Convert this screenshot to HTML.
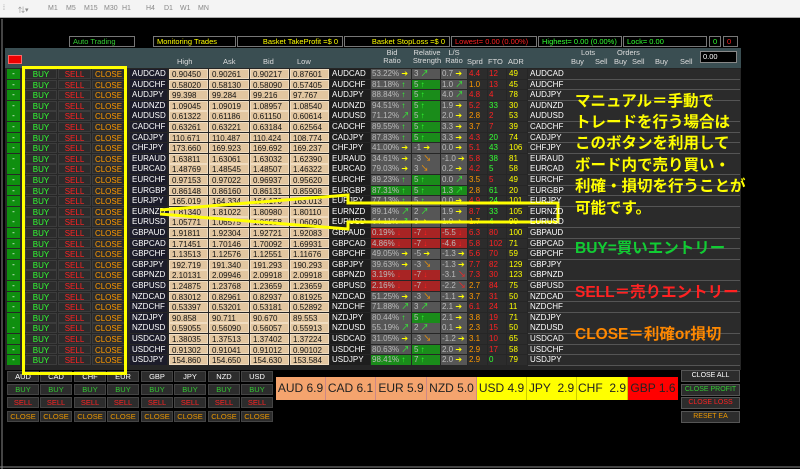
<!DOCTYPE html>
<html><head><meta charset="utf-8"><style>
*{margin:0;padding:0;box-sizing:border-box}
body{width:800px;height:469px;background:#000;position:relative;overflow:hidden;font-family:"Liberation Sans","Noto Sans CJK JP",sans-serif;font-size:8px}
.tb{position:absolute;left:0;top:0;width:800px;height:18px;background:#f4f4f4;border-bottom:1px solid #aaa;color:#888;font-size:7px}
.tb span{position:absolute;top:5px}
.st{position:absolute;top:36px;height:11px;background:#000;border:1px solid #777;font-size:7.5px;line-height:9px;padding-left:3px;white-space:nowrap;overflow:hidden}
.pan{position:absolute;left:5px;top:48px;width:736px;height:322px;background:#262626}
.hd{position:absolute;left:5px;top:48px;width:736px;height:20px;background:#3a4e52;color:#ddd;font-size:7.5px}
.hd span{position:absolute;line-height:8px;text-align:center}
.r{position:absolute;left:0;width:741px;height:10.6px}
.r>*{position:absolute;top:0;height:9.8px;line-height:9.8px;font-style:normal;text-decoration:none;font-weight:normal;white-space:nowrap;overflow:hidden}
.r::after{content:"";position:absolute;left:528px;width:212px;top:0;height:9.8px;background:#2b2b2b;border-bottom:1px solid #555}
.g{left:7px;width:13px;background:#0f8f0f;color:#fff;text-align:center}
.bu,.se,.cl{background:#2c2c2c;text-align:center;border:1px solid #3c3c3c}
.bu{left:25px;width:32px;color:#3f3}
.se{left:58px;width:33px;color:#f22}
.cl{left:92px;width:33px;color:#f90}
.p1{left:130px;width:37px;background:#1c1c2a;color:#fff;padding-left:2px}
.n{background:#e2c6a0;color:#111;padding-left:2px;border:1px solid #f0dcc0}
.h{left:169px;width:39px}.a{left:209px;width:40px}.b{left:250px;width:39px}.l{left:290px;width:39px}
.p2{left:330px;width:40px;background:#1e1e1e;color:#fff;padding-left:2px}
.br{left:371px;width:40px;background:#565656;color:#bbb;padding-left:1px}
.rs{left:412px;width:28px;background:#565656;color:#bbb;padding-left:2px}
.ls{left:441px;width:26px;background:#565656;color:#bbb;padding-left:1px}
.G{background:#1a8c1a!important}.R{background:#a82424!important}
.sp{left:468px;width:19px;background:#2c2c2c;padding-left:1px}
.ft{left:488px;width:18px;background:#2c2c2c;padding-left:1px}
.ad{left:507px;width:20px;background:#2c2c2c;color:#ff0;padding-left:2px}
.p3{left:530px;width:40px;color:#fff;z-index:2}
.y{color:#ff0}.gr{color:#3f3}.or{color:#f90}.rd{color:#f22}
.cb{position:absolute;width:32px;height:11px;background:#2c2c2c;border:1px solid #444;text-align:center;line-height:9px;font-size:7.5px}
.sb{position:absolute;top:377px;height:23px;line-height:23px;font-size:12px;color:#222;text-align:center;border-right:1px solid #c88}
.rb{position:absolute;left:681px;width:59px;height:12px;background:#2c2c2c;border:1px solid #555;text-align:center;font-size:7px;line-height:10px}
.jp{position:absolute;left:575px;font-size:15.5px;font-weight:bold;color:#ff0;white-space:nowrap;letter-spacing:0}
</style></head><body>
<div class="tb"><span style="left:3px">⁞</span><span style="left:18px">⇅▾</span><span style="left:48px">M1</span><span style="left:66px">M5</span><span style="left:84px">M15</span><span style="left:104px">M30</span><span style="left:122px">H1</span><span style="left:146px">H4</span><span style="left:164px">D1</span><span style="left:180px">W1</span><span style="left:198px">MN</span></div>

<div class="st" style="left:69px;width:66px;color:#3c3">Auto Trading</div>
<div class="st" style="left:153px;width:83px;color:#ff0">Monitoring Trades</div>
<div class="st" style="left:237px;width:106px;color:#ff0;text-align:right;padding-right:4px">Basket TakeProfit =$ 0</div>
<div class="st" style="left:344px;width:106px;color:#ff0;text-align:right;padding-right:4px">Basket StopLoss =$ 0</div>
<div class="st" style="left:451px;width:86px;color:#f22">Lowest= 0.00 (0.00%)</div>
<div class="st" style="left:538px;width:84px;color:#3f3">Highest= 0.00 (0.00%)</div>
<div class="st" style="left:623px;width:84px;color:#3f3">Lock= 0.00</div>
<div class="st" style="left:709px;width:12px;color:#3f3">0</div>
<div class="st" style="left:723px;width:15px;color:#f22">0</div>

<div class="pan"></div>
<div class="hd">
<div style="position:absolute;left:3px;top:7px;width:14px;height:9px;background:#e00;border:1px solid #f66"></div>
<span style="left:172px;top:10px">High</span><span style="left:218px;top:10px">Ask</span><span style="left:258px;top:10px">Bid</span><span style="left:292px;top:10px">Low</span>
<span style="left:372px;top:1px;width:30px">Bid<br>Ratio</span><span style="left:407px;top:1px;width:30px">Relative<br>Strength</span><span style="left:437px;top:1px;width:24px">L/S<br>Ratio</span>
<span style="left:462px;top:10px">Sprd</span><span style="left:483px;top:10px">FTO</span><span style="left:503px;top:10px">ADR</span>
<span style="left:576px;top:1px">Lots</span><span style="left:612px;top:1px">Orders</span>
<span style="left:566px;top:10px">Buy</span><span style="left:590px;top:10px">Sell</span><span style="left:609px;top:10px">Buy</span><span style="left:627px;top:10px">Sell</span><span style="left:650px;top:10px">Buy</span><span style="left:675px;top:10px">Sell</span>
<div style="position:absolute;left:695px;top:3px;width:37px;height:12px;background:#000;border:1px solid #888;color:#fff;font-size:7.5px;line-height:10px;padding-left:2px">0.00</div>
</div>

<div style="position:absolute;left:0;top:69px">
<div class="r" style="top:0"><i class="g">-</i><b class="bu">BUY</b><b class="se">SELL</b><b class="cl">CLOSE</b><s class="p1">AUDCAD</s><u class="n h">0.90450</u><u class="n a">0.90261</u><u class="n b">0.90217</u><u class="n l">0.87601</u><s class="p2">AUDCAD</s><em class="br">53.22% <span class="y">➔</span></em><em class="rs">3 <span class="gr">↗</span></em><em class="ls">0.7 <span class="y">➔</span></em><span class="sp rd">4.4</span><span class="ft rd">12</span><span class="ad">49</span><s class="p3">AUDCAD</s></div>
<div class="r" style="top:10.6px"><i class="g">-</i><b class="bu">BUY</b><b class="se">SELL</b><b class="cl">CLOSE</b><s class="p1">AUDCHF</s><u class="n h">0.58020</u><u class="n a">0.58130</u><u class="n b">0.58090</u><u class="n l">0.57405</u><s class="p2">AUDCHF</s><em class="br">81.18% <span class="gr">↑</span></em><em class="rs G">5 <span class="gr">↑</span></em><em class="ls">1.0 <span class="gr">↗</span></em><span class="sp or">1.0</span><span class="ft rd">13</span><span class="ad">45</span><s class="p3">AUDCHF</s></div>
<div class="r" style="top:21.2px"><i class="g">-</i><b class="bu">BUY</b><b class="se">SELL</b><b class="cl">CLOSE</b><s class="p1">AUDJPY</s><u class="n h">99.398</u><u class="n a">99.284</u><u class="n b">99.216</u><u class="n l">97.767</u><s class="p2">AUDJPY</s><em class="br">88.84% <span class="gr">↑</span></em><em class="rs G">5 <span class="gr">↑</span></em><em class="ls">4.0 <span class="gr">↗</span></em><span class="sp rd">4.8</span><span class="ft rd">4</span><span class="ad">78</span><s class="p3">AUDJPY</s></div>
<div class="r" style="top:31.8px"><i class="g">-</i><b class="bu">BUY</b><b class="se">SELL</b><b class="cl">CLOSE</b><s class="p1">AUDNZD</s><u class="n h">1.09045</u><u class="n a">1.09019</u><u class="n b">1.08957</u><u class="n l">1.08540</u><s class="p2">AUDNZD</s><em class="br">94.51% <span class="gr">↑</span></em><em class="rs G">5 <span class="gr">↑</span></em><em class="ls">1.9 <span class="y">➔</span></em><span class="sp rd">5.2</span><span class="ft gr">33</span><span class="ad">30</span><s class="p3">AUDNZD</s></div>
<div class="r" style="top:42.4px"><i class="g">-</i><b class="bu">BUY</b><b class="se">SELL</b><b class="cl">CLOSE</b><s class="p1">AUDUSD</s><u class="n h">0.61322</u><u class="n a">0.61186</u><u class="n b">0.61150</u><u class="n l">0.60614</u><s class="p2">AUDUSD</s><em class="br">71.12% <span class="gr">↗</span></em><em class="rs G">5 <span class="gr">↑</span></em><em class="ls">2.0 <span class="y">➔</span></em><span class="sp or">2.8</span><span class="ft rd">2</span><span class="ad">53</span><s class="p3">AUDUSD</s></div>
<div class="r" style="top:53px"><i class="g">-</i><b class="bu">BUY</b><b class="se">SELL</b><b class="cl">CLOSE</b><s class="p1">CADCHF</s><u class="n h">0.63261</u><u class="n a">0.63221</u><u class="n b">0.63184</u><u class="n l">0.62564</u><s class="p2">CADCHF</s><em class="br">89.55% <span class="gr">↑</span></em><em class="rs G">5 <span class="gr">↑</span></em><em class="ls">3.3 <span class="y">➔</span></em><span class="sp or">3.7</span><span class="ft rd">7</span><span class="ad">39</span><s class="p3">CADCHF</s></div>
<div class="r" style="top:63.6px"><i class="g">-</i><b class="bu">BUY</b><b class="se">SELL</b><b class="cl">CLOSE</b><s class="p1">CADJPY</s><u class="n h">110.671</u><u class="n a">110.487</u><u class="n b">110.424</u><u class="n l">108.774</u><s class="p2">CADJPY</s><em class="br">87.83% <span class="gr">↑</span></em><em class="rs G">5 <span class="gr">↑</span></em><em class="ls">3.3 <span class="y">➔</span></em><span class="sp rd">4.3</span><span class="ft gr">20</span><span class="ad">74</span><s class="p3">CADJPY</s></div>
<div class="r" style="top:74.2px"><i class="g">-</i><b class="bu">BUY</b><b class="se">SELL</b><b class="cl">CLOSE</b><s class="p1">CHFJPY</s><u class="n h">173.660</u><u class="n a">169.923</u><u class="n b">169.692</u><u class="n l">169.237</u><s class="p2">CHFJPY</s><em class="br">41.00% <span class="y">➔</span></em><em class="rs">-1 <span class="y">➔</span></em><em class="ls">0.0 <span class="y">➔</span></em><span class="sp rd">5.1</span><span class="ft gr">43</span><span class="ad">106</span><s class="p3">CHFJPY</s></div>
<div class="r" style="top:84.8px"><i class="g">-</i><b class="bu">BUY</b><b class="se">SELL</b><b class="cl">CLOSE</b><s class="p1">EURAUD</s><u class="n h">1.63811</u><u class="n a">1.63061</u><u class="n b">1.63032</u><u class="n l">1.62390</u><s class="p2">EURAUD</s><em class="br">34.61% <span class="y">➔</span></em><em class="rs">-3 <span class="or">↘</span></em><em class="ls">-1.0 <span class="y">➔</span></em><span class="sp rd">5.8</span><span class="ft gr">38</span><span class="ad">81</span><s class="p3">EURAUD</s></div>
<div class="r" style="top:95.4px"><i class="g">-</i><b class="bu">BUY</b><b class="se">SELL</b><b class="cl">CLOSE</b><s class="p1">EURCAD</s><u class="n h">1.48769</u><u class="n a">1.48545</u><u class="n b">1.48507</u><u class="n l">1.46322</u><s class="p2">EURCAD</s><em class="br">79.03% <span class="y">➔</span></em><em class="rs">3 <span class="or">↘</span></em><em class="ls">0.2 <span class="y">➔</span></em><span class="sp rd">4.2</span><span class="ft gr">5</span><span class="ad">58</span><s class="p3">EURCAD</s></div>
<div class="r" style="top:106px"><i class="g">-</i><b class="bu">BUY</b><b class="se">SELL</b><b class="cl">CLOSE</b><s class="p1">EURCHF</s><u class="n h">0.97153</u><u class="n a">0.97022</u><u class="n b">0.96937</u><u class="n l">0.95620</u><s class="p2">EURCHF</s><em class="br">89.23% <span class="gr">↑</span></em><em class="rs G">5 <span class="gr">↑</span></em><em class="ls">0.0 <span class="gr">↗</span></em><span class="sp or">3.5</span><span class="ft rd">5</span><span class="ad">49</span><s class="p3">EURCHF</s></div>
<div class="r" style="top:116.6px"><i class="g">-</i><b class="bu">BUY</b><b class="se">SELL</b><b class="cl">CLOSE</b><s class="p1">EURGBP</s><u class="n h">0.86148</u><u class="n a">0.86160</u><u class="n b">0.86131</u><u class="n l">0.85908</u><s class="p2">EURGBP</s><em class="br G">87.31% <span class="gr">↑</span></em><em class="rs G">5 <span class="gr">↑</span></em><em class="ls G">1.3 <span class="gr">↗</span></em><span class="sp or">2.8</span><span class="ft gr">61</span><span class="ad">20</span><s class="p3">EURGBP</s></div>
<div class="r" style="top:127.2px"><i class="g">-</i><b class="bu">BUY</b><b class="se">SELL</b><b class="cl">CLOSE</b><s class="p1">EURJPY</s><u class="n h">165.019</u><u class="n a">164.334</u><u class="n b">164.170</u><u class="n l">163.013</u><s class="p2">EURJPY</s><em class="br">77.13% <span class="gr">↑</span></em><em class="rs">5 <span class="gr">↑</span></em><em class="ls">0.0 <span class="y">➔</span></em><span class="sp rd">4.9</span><span class="ft gr">24</span><span class="ad">101</span><s class="p3">EURJPY</s></div>
<div class="r" style="top:137.8px"><i class="g">-</i><b class="bu">BUY</b><b class="se">SELL</b><b class="cl">CLOSE</b><s class="p1">EURNZD</s><u class="n h">1.81340</u><u class="n a">1.81022</u><u class="n b">1.80980</u><u class="n l">1.80110</u><s class="p2">EURNZD</s><em class="br">89.14% <span class="gr">↗</span></em><em class="rs">2 <span class="gr">↗</span></em><em class="ls">1.9 <span class="y">➔</span></em><span class="sp rd">8.7</span><span class="ft gr">33</span><span class="ad">105</span><s class="p3">EURNZD</s></div>
<div class="r" style="top:148.4px"><i class="g">-</i><b class="bu">BUY</b><b class="se">SELL</b><b class="cl">CLOSE</b><s class="p1">EURUSD</s><u class="n h">1.05771</u><u class="n a">1.06575</u><u class="n b">1.06558</u><u class="n l">1.06090</u><s class="p2">EURUSD</s><em class="br">64.11% <span class="gr">↗</span></em><em class="rs">3 <span class="y">➔</span></em><em class="ls">1.0 <span class="y">➔</span></em><span class="sp or">1.7</span><span class="ft gr">4</span><span class="ad">90</span><s class="p3">EURUSD</s></div>
<div class="r" style="top:159px"><i class="g">-</i><b class="bu">BUY</b><b class="se">SELL</b><b class="cl">CLOSE</b><s class="p1">GBPAUD</s><u class="n h">1.91811</u><u class="n a">1.92304</u><u class="n b">1.92721</u><u class="n l">1.92083</u><s class="p2">GBPAUD</s><em class="br R">0.19% <span class="rd">↓</span></em><em class="rs R">-7 <span class="rd">↓</span></em><em class="ls R">-5.5 <span class="rd">↓</span></em><span class="sp rd">6.3</span><span class="ft rd">80</span><span class="ad">100</span><s class="p3">GBPAUD</s></div>
<div class="r" style="top:169.6px"><i class="g">-</i><b class="bu">BUY</b><b class="se">SELL</b><b class="cl">CLOSE</b><s class="p1">GBPCAD</s><u class="n h">1.71451</u><u class="n a">1.70146</u><u class="n b">1.70092</u><u class="n l">1.69931</u><s class="p2">GBPCAD</s><em class="br R">4.86% <span class="rd">↓</span></em><em class="rs R">-7 <span class="rd">↓</span></em><em class="ls R">-4.6 <span class="rd">↓</span></em><span class="sp rd">5.8</span><span class="ft rd">102</span><span class="ad">71</span><s class="p3">GBPCAD</s></div>
<div class="r" style="top:180.2px"><i class="g">-</i><b class="bu">BUY</b><b class="se">SELL</b><b class="cl">CLOSE</b><s class="p1">GBPCHF</s><u class="n h">1.13513</u><u class="n a">1.12576</u><u class="n b">1.12551</u><u class="n l">1.11676</u><s class="p2">GBPCHF</s><em class="br">49.05% <span class="y">➔</span></em><em class="rs">-5 <span class="y">➔</span></em><em class="ls">-1.3 <span class="y">➔</span></em><span class="sp rd">5.6</span><span class="ft rd">70</span><span class="ad">59</span><s class="p3">GBPCHF</s></div>
<div class="r" style="top:190.8px"><i class="g">-</i><b class="bu">BUY</b><b class="se">SELL</b><b class="cl">CLOSE</b><s class="p1">GBPJPY</s><u class="n h">192.719</u><u class="n a">191.340</u><u class="n b">191.293</u><u class="n l">190.293</u><s class="p2">GBPJPY</s><em class="br">39.63% <span class="y">➔</span></em><em class="rs">-3 <span class="or">↘</span></em><em class="ls">-1.3 <span class="y">➔</span></em><span class="sp rd">7.7</span><span class="ft rd">82</span><span class="ad">129</span><s class="p3">GBPJPY</s></div>
<div class="r" style="top:201.4px"><i class="g">-</i><b class="bu">BUY</b><b class="se">SELL</b><b class="cl">CLOSE</b><s class="p1">GBPNZD</s><u class="n h">2.10131</u><u class="n a">2.09946</u><u class="n b">2.09918</u><u class="n l">2.09918</u><s class="p2">GBPNZD</s><em class="br R">3.19% <span class="rd">↓</span></em><em class="rs R">-7 <span class="rd">↓</span></em><em class="ls">-3.1 <span class="rd">↘</span></em><span class="sp rd">7.3</span><span class="ft rd">30</span><span class="ad">123</span><s class="p3">GBPNZD</s></div>
<div class="r" style="top:212px"><i class="g">-</i><b class="bu">BUY</b><b class="se">SELL</b><b class="cl">CLOSE</b><s class="p1">GBPUSD</s><u class="n h">1.24875</u><u class="n a">1.23768</u><u class="n b">1.23659</u><u class="n l">1.23659</u><s class="p2">GBPUSD</s><em class="br R">2.16% <span class="rd">↓</span></em><em class="rs R">-7 <span class="rd">↓</span></em><em class="ls">-2.2 <span class="rd">↘</span></em><span class="sp or">2.7</span><span class="ft rd">84</span><span class="ad">75</span><s class="p3">GBPUSD</s></div>
<div class="r" style="top:222.6px"><i class="g">-</i><b class="bu">BUY</b><b class="se">SELL</b><b class="cl">CLOSE</b><s class="p1">NZDCAD</s><u class="n h">0.83012</u><u class="n a">0.82961</u><u class="n b">0.82937</u><u class="n l">0.81925</u><s class="p2">NZDCAD</s><em class="br">51.25% <span class="y">➔</span></em><em class="rs">-3 <span class="or">↘</span></em><em class="ls">-1.1 <span class="y">➔</span></em><span class="sp or">3.7</span><span class="ft rd">31</span><span class="ad">50</span><s class="p3">NZDCAD</s></div>
<div class="r" style="top:233.2px"><i class="g">-</i><b class="bu">BUY</b><b class="se">SELL</b><b class="cl">CLOSE</b><s class="p1">NZDCHF</s><u class="n h">0.53397</u><u class="n a">0.53201</u><u class="n b">0.53181</u><u class="n l">0.52892</u><s class="p2">NZDCHF</s><em class="br">71.88% <span class="gr">↗</span></em><em class="rs">3 <span class="gr">↗</span></em><em class="ls">2.1 <span class="y">➔</span></em><span class="sp rd">6.1</span><span class="ft rd">24</span><span class="ad">11</span><s class="p3">NZDCHF</s></div>
<div class="r" style="top:243.8px"><i class="g">-</i><b class="bu">BUY</b><b class="se">SELL</b><b class="cl">CLOSE</b><s class="p1">NZDJPY</s><u class="n h">90.858</u><u class="n a">90.711</u><u class="n b">90.670</u><u class="n l">89.553</u><s class="p2">NZDJPY</s><em class="br">80.44% <span class="gr">↑</span></em><em class="rs G">5 <span class="gr">↑</span></em><em class="ls">2.1 <span class="y">➔</span></em><span class="sp or">3.8</span><span class="ft rd">19</span><span class="ad">71</span><s class="p3">NZDJPY</s></div>
<div class="r" style="top:254.4px"><i class="g">-</i><b class="bu">BUY</b><b class="se">SELL</b><b class="cl">CLOSE</b><s class="p1">NZDUSD</s><u class="n h">0.59055</u><u class="n a">0.56090</u><u class="n b">0.56057</u><u class="n l">0.55913</u><s class="p2">NZDUSD</s><em class="br">55.19% <span class="gr">↗</span></em><em class="rs">2 <span class="gr">↗</span></em><em class="ls">0.1 <span class="y">➔</span></em><span class="sp or">2.3</span><span class="ft rd">15</span><span class="ad">50</span><s class="p3">NZDUSD</s></div>
<div class="r" style="top:265px"><i class="g">-</i><b class="bu">BUY</b><b class="se">SELL</b><b class="cl">CLOSE</b><s class="p1">USDCAD</s><u class="n h">1.38035</u><u class="n a">1.37513</u><u class="n b">1.37402</u><u class="n l">1.37224</u><s class="p2">USDCAD</s><em class="br">31.05% <span class="y">➔</span></em><em class="rs">-3 <span class="or">↘</span></em><em class="ls">-1.2 <span class="y">➔</span></em><span class="sp or">3.1</span><span class="ft rd">10</span><span class="ad">65</span><s class="p3">USDCAD</s></div>
<div class="r" style="top:275.6px"><i class="g">-</i><b class="bu">BUY</b><b class="se">SELL</b><b class="cl">CLOSE</b><s class="p1">USDCHF</s><u class="n h">0.91302</u><u class="n a">0.91041</u><u class="n b">0.91012</u><u class="n l">0.90102</u><s class="p2">USDCHF</s><em class="br">80.63% <span class="gr">↗</span></em><em class="rs G">5 <span class="gr">↑</span></em><em class="ls">2.0 <span class="y">➔</span></em><span class="sp or">2.9</span><span class="ft rd">17</span><span class="ad">58</span><s class="p3">USDCHF</s></div>
<div class="r" style="top:286.2px"><i class="g">-</i><b class="bu">BUY</b><b class="se">SELL</b><b class="cl">CLOSE</b><s class="p1">USDJPY</s><u class="n h">154.860</u><u class="n a">154.650</u><u class="n b">154.630</u><u class="n l">153.584</u><s class="p2">USDJPY</s><em class="br G">98.41% <span class="gr">↑</span></em><em class="rs G">7 <span class="gr">↑</span></em><em class="ls">2.0 <span class="y">➔</span></em><span class="sp or">2.9</span><span class="ft gr">0</span><span class="ad">79</span><s class="p3">USDJPY</s></div>
</div>

<div class="cb" style="left:7px;top:371px;color:#fff">AUD</div><div class="cb" style="left:40px;top:371px;color:#fff">CAD</div><div class="cb" style="left:74px;top:371px;color:#fff">CHF</div><div class="cb" style="left:107px;top:371px;color:#fff">EUR</div><div class="cb" style="left:141px;top:371px;color:#fff">GBP</div><div class="cb" style="left:174px;top:371px;color:#fff">JPY</div><div class="cb" style="left:208px;top:371px;color:#fff">NZD</div><div class="cb" style="left:241px;top:371px;color:#fff">USD</div>
<div class="cb" style="left:7px;top:384px;color:#3c3">BUY</div><div class="cb" style="left:40px;top:384px;color:#3c3">BUY</div><div class="cb" style="left:74px;top:384px;color:#3c3">BUY</div><div class="cb" style="left:107px;top:384px;color:#3c3">BUY</div><div class="cb" style="left:141px;top:384px;color:#3c3">BUY</div><div class="cb" style="left:174px;top:384px;color:#3c3">BUY</div><div class="cb" style="left:208px;top:384px;color:#3c3">BUY</div><div class="cb" style="left:241px;top:384px;color:#3c3">BUY</div>
<div class="cb" style="left:7px;top:397px;color:#f22">SELL</div><div class="cb" style="left:40px;top:397px;color:#f22">SELL</div><div class="cb" style="left:74px;top:397px;color:#f22">SELL</div><div class="cb" style="left:107px;top:397px;color:#f22">SELL</div><div class="cb" style="left:141px;top:397px;color:#f22">SELL</div><div class="cb" style="left:174px;top:397px;color:#f22">SELL</div><div class="cb" style="left:208px;top:397px;color:#f22">SELL</div><div class="cb" style="left:241px;top:397px;color:#f22">SELL</div>
<div class="cb" style="left:7px;top:411px;color:#e90">CLOSE</div><div class="cb" style="left:40px;top:411px;color:#e90">CLOSE</div><div class="cb" style="left:74px;top:411px;color:#e90">CLOSE</div><div class="cb" style="left:107px;top:411px;color:#e90">CLOSE</div><div class="cb" style="left:141px;top:411px;color:#e90">CLOSE</div><div class="cb" style="left:174px;top:411px;color:#e90">CLOSE</div><div class="cb" style="left:208px;top:411px;color:#e90">CLOSE</div><div class="cb" style="left:241px;top:411px;color:#e90">CLOSE</div>

<div class="sb" style="left:276px;width:50px;background:#f4a46e">AUD 6.9</div>
<div class="sb" style="left:326px;width:50px;background:#f4a46e">CAD 6.1</div>
<div class="sb" style="left:376px;width:51px;background:#f4a46e">EUR 5.9</div>
<div class="sb" style="left:427px;width:50px;background:#f4a46e">NZD 5.0</div>
<div class="sb" style="left:477px;width:50px;background:#ffff00;border-color:#cc0">USD 4.9</div>
<div class="sb" style="left:527px;width:50px;background:#ffff00;border-color:#cc0">JPY&nbsp; 2.9</div>
<div class="sb" style="left:577px;width:51px;background:#ffff00;border-color:#cc0">CHF&nbsp; 2.9</div>
<div class="sb" style="left:628px;width:50px;background:#f00;border:none">GBP 1.6</div>

<div class="rb" style="top:370px;color:#fff">CLOSE ALL</div>
<div class="rb" style="top:384px;color:#3c3">CLOSE PROFIT</div>
<div class="rb" style="top:397px;color:#f22">CLOSE LOSS</div>
<div class="rb" style="top:411px;color:#e90">RESET EA</div>

<div class="jp" style="top:89px">マニュアル＝手動で</div>
<div class="jp" style="top:110px">トレードを行う場合は</div>
<div class="jp" style="top:131px">このボタンを利用して</div>
<div class="jp" style="top:153px">ボード内で売り買い・</div>
<div class="jp" style="top:174px">利確・損切を行うことが</div>
<div class="jp" style="top:196px">可能です。</div>
<div class="jp" style="top:236px;color:#1c3">BUY=買いエントリー</div>
<div class="jp" style="top:280px;color:#f22">SELL＝売りエントリー</div>
<div class="jp" style="top:322px;color:#f80">CLOSE＝利確or損切</div>

<svg width="800" height="469" style="position:absolute;left:0;top:0">
<rect x="23.5" y="67.5" width="102" height="306" fill="none" stroke="#ff0" stroke-width="3"/>
<polyline points="160,210 348,195 348,203 558,203 558,222 348,222 348,229 160,214" fill="none" stroke="#ff0" stroke-width="3"/>
<line x1="2" y1="19" x2="2" y2="469" stroke="#888"/>
<line x1="0" y1="467" x2="800" y2="467" stroke="#888"/>
</svg>
</body></html>
